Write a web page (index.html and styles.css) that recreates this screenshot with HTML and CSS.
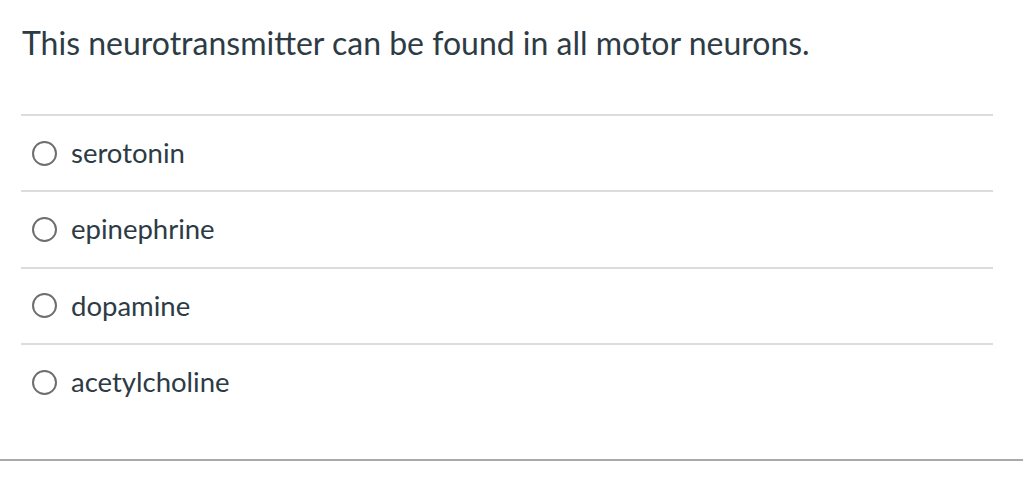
FILE: index.html
```html
<!DOCTYPE html>
<html>
<head>
<meta charset="utf-8">
<link rel="stylesheet" href="styles.css">
</head>
<body>
<div class="question">
  <div class="prompt">This neurotransmitter can be found in all motor neurons.</div>
  <div class="answers">
    <label class="answer"><span class="radio"></span><span class="label">serotonin</span></label>
    <label class="answer"><span class="radio"></span><span class="label">epinephrine</span></label>
    <label class="answer"><span class="radio"></span><span class="label">dopamine</span></label>
    <label class="answer"><span class="radio"></span><span class="label">acetylcholine</span></label>
  </div>
</div>
<div class="footer-rule"></div>
</body>
</html>
```
FILE: styles.css
```css
html, body {
  margin: 0;
  padding: 0;
  background: #ffffff;
}
body {
  font-family: Lato, "Liberation Sans", sans-serif;
  color: #2d3b45;
}
.question {
  padding: 0 30px 40px 21px;
}
.prompt {
  font-size: 32px;
  line-height: 38px;
  padding: 24px 0 0 1px;
  height: 114px;
  box-sizing: border-box;
}
.answers {
  border-top: 2px solid #dcdcdc;
}
.answer {
  display: flex;
  align-items: center;
  height: 74.33px;
  border-bottom: 2px solid #dcdcdc;
}
.answer:last-child {
  border-bottom: none;
}
.radio {
  width: 21px;
  height: 21px;
  border: 2px solid #6e6e6e;
  border-radius: 50%;
  margin-left: 11px;
  margin-right: 14px;
  flex: none;
}
.label {
  font-size: 27.5px;
  line-height: 34px;
}
.footer-rule {
  height: 2px;
  background: #a9a9a9;
}
```
